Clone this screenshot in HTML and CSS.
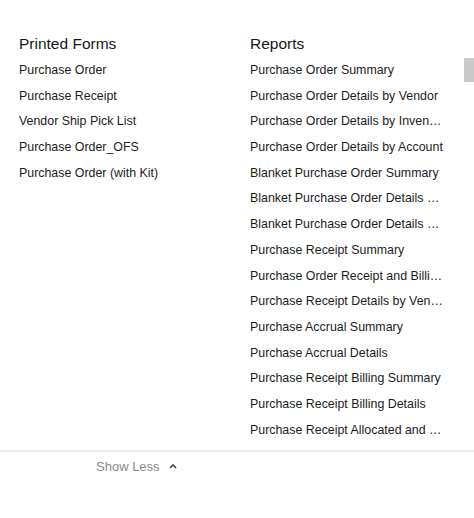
FILE: index.html
```html
<!DOCTYPE html>
<html>
<head>
<meta charset="utf-8">
<link rel="stylesheet" href="styles.css">
</head>
<body>
<div class="panel">
  <div class="columns">
    <section class="col">
      <h2 class="col-title">Printed Forms</h2>
      <ul class="list">
        <li class="item">Purchase Order</li>
        <li class="item">Purchase Receipt</li>
        <li class="item">Vendor Ship Pick List</li>
        <li class="item">Purchase Order_OFS</li>
        <li class="item">Purchase Order (with Kit)</li>
      </ul>
    </section>
    <section class="col col-reports">
      <h2 class="col-title">Reports</h2>
      <div class="scroll">
        <ul class="list">
          <li class="item">Purchase Order Summary</li>
          <li class="item">Purchase Order Details by Vendor</li>
          <li class="item">Purchase Order Details by Inventory Item</li>
          <li class="item">Purchase Order Details by Account</li>
          <li class="item">Blanket Purchase Order Summary</li>
          <li class="item">Blanket Purchase Order Details by Vendor</li>
          <li class="item">Blanket Purchase Order Details by Item</li>
          <li class="item">Purchase Receipt Summary</li>
          <li class="item">Purchase Order Receipt and Billing</li>
          <li class="item">Purchase Receipt Details by Vendor</li>
          <li class="item">Purchase Accrual Summary</li>
          <li class="item">Purchase Accrual Details</li>
          <li class="item">Purchase Receipt Billing Summary</li>
          <li class="item">Purchase Receipt Billing Details</li>
          <li class="item">Purchase Receipt Allocated and Unallocated</li>
        </ul>
        <div class="thumb"></div>
      </div>
    </section>
  </div>
  <div class="footer">
    <button class="toggle">Show Less
      <svg class="chev" width="8" height="6" viewBox="0 0 8 6"><path d="M1 5 L4 2 L7 5" fill="none" stroke="#444" stroke-width="1.6"/></svg>
    </button>
  </div>
</div>
</body>
</html>
```
FILE: styles.css
```css
html, body {
  margin: 0;
  padding: 0;
  background: #fff;
}
body {
  font-family: "Liberation Sans", Arial, sans-serif;
  color: #1c1c1c;
}
.panel {
  width: 474px;
}
.columns {
  display: grid;
  grid-template-columns: 231px 1fr;
  height: 450px;
}
.col {
  padding-left: 19px;
  padding-top: 35px;
  display: flex;
  flex-direction: column;
  min-width: 0;
}
.col-title {
  margin: 0 0 5px 0;
  font-size: 15.5px;
  font-weight: normal;
  line-height: 18px;
  color: #161616;
}
.list {
  list-style: none;
  margin: 0;
  padding: 0;
}
.item {
  height: 25.7px;
  line-height: 25.7px;
  font-size: 12.4px;
  white-space: nowrap;
  overflow: hidden;
  text-overflow: ellipsis;
}
.col-reports {
  padding-left: 19px;
  min-height: 0;
}
.scroll {
  position: relative;
  flex: 1;
  min-height: 0;
  overflow: hidden;
}
.col-reports .list {
  width: 193px;
}
.thumb {
  position: absolute;
  right: 0;
  top: -2px;
  width: 10px;
  height: 26px;
  background: #c9c9c9;
}
.footer {
  border-top: 2px solid #ececec;
  padding-left: 96px;
  padding-top: 7px;
}
.toggle {
  border: 0;
  background: none;
  padding: 0;
  font-family: "Liberation Sans", Arial, sans-serif;
  font-size: 13px;
  color: #8a8a8a;
  display: flex;
  align-items: center;
  gap: 9px;
  line-height: 16px;
}
.chev {
  display: block;
  margin-top: -3px;
}
```
